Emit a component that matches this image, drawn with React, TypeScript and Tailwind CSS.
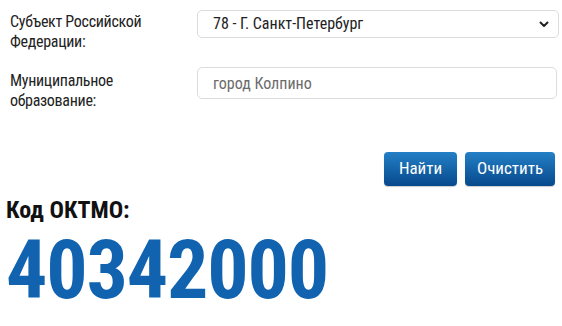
const cond = { fontFamily: 'Roboto, "Noto Sans", sans-serif', fontStretch: '75%' };

function Chevron() {
  return (
    <svg width="10" height="7" viewBox="0 0 10 7" fill="none">
      <path d="M1.5 1.5 L5 5 L8.5 1.5" stroke="#222" strokeWidth="2" strokeLinecap="round" strokeLinejoin="round" />
    </svg>
  );
}

export default function App() {
  return (
    <div className="w-[562px] h-[326px] bg-white overflow-hidden pt-[10px]" style={cond}>
      <div className="flex items-start">
        <label className="w-[197px] pl-[10px] mt-[2px] text-[16px] leading-[20px] text-[#222] tracking-[-0.3px]">
          Субъект Российской
          <br />
          Федерации:
        </label>
        <div className="w-[362px] h-[28px] border border-[#dcdcdc] rounded-[5px] flex items-center justify-between pl-[15px] pr-[9px] text-[16px] text-[#222]">
          <span>78 - Г. Санкт-Петербург</span>
          <Chevron />
        </div>
      </div>

      <div className="flex items-start mt-[15px]">
        <label className="w-[197px] pl-[10px] mt-[4px] text-[16px] leading-[20px] text-[#222] tracking-[-0.3px]">
          Муниципальное
          <br />
          образование:
        </label>
        <input
          type="text"
          placeholder="город Колпино"
          style={cond}
          className="w-[360px] h-[32px] border border-[#dcdcdc] rounded-[5px] pl-[15px] text-[16px] text-[#222] placeholder:text-[#6b6b6b] outline-none"
        />
      </div>

      <div className="flex justify-end gap-[8px] pr-[7px] mt-[41px]">
        <button
          type="button"
          style={cond}
          className="w-[73px] h-[34px] rounded-[4px] bg-gradient-to-b from-[#2480c6] to-[#07498c] text-white text-[17px] shadow-[0_1px_1px_rgba(0,0,0,0.2)]"
        >
          Найти
        </button>
        <button
          type="button"
          style={cond}
          className="w-[90px] h-[34px] rounded-[4px] bg-gradient-to-b from-[#2480c6] to-[#07498c] text-white text-[17px] shadow-[0_1px_1px_rgba(0,0,0,0.2)]"
        >
          Очистить
        </button>
      </div>

      <div className="pl-[6px] mt-[11px] text-[24px] leading-[26px] font-bold text-[#111]">Код ОКТМО:</div>
      <div className="pl-[6px] mt-[5px] text-[82px] leading-[84px] font-bold text-[#1163b0] tracking-[-1.2px]">40342000</div>
    </div>
  );
}
